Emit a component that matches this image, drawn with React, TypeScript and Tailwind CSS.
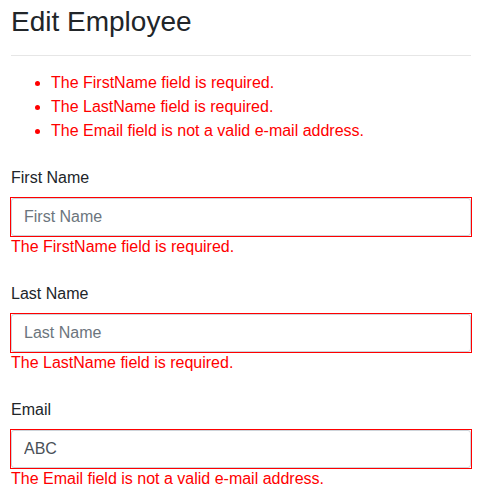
import React from 'react';

type Field = {
  label: string;
  placeholder: string;
  value?: string;
  error: string;
};

const fields: Field[] = [
  { label: 'First Name', placeholder: 'First Name', error: 'The FirstName field is required.' },
  { label: 'Last Name', placeholder: 'Last Name', error: 'The LastName field is required.' },
  { label: 'Email', placeholder: 'Email', value: 'ABC', error: 'The Email field is not a valid e-mail address.' },
];

const summary = [
  'The FirstName field is required.',
  'The LastName field is required.',
  'The Email field is not a valid e-mail address.',
];

function FormField({ field }: { field: Field }) {
  return (
    <div className="mb-[25px]">
      <label className="block leading-6 mb-2">{field.label}</label>
      {/* square red outline around the rounded input */}
      <div className="-mx-px -my-px border border-[#ff0000]">
        <input
          className="block w-full h-[38px] px-3 border border-[#ced4da] rounded-[3px] bg-white text-[16px] text-[#495057] placeholder:text-[#6c757d] outline-none"
          placeholder={field.placeholder}
          defaultValue={field.value}
        />
      </div>
      <div className="leading-[21px] text-[#ff0000]">{field.error}</div>
    </div>
  );
}

export default function App() {
  return (
    <div className="min-h-screen bg-white px-[11px] pt-[5px] font-['Liberation_Sans',Arial,sans-serif] text-[16px] leading-6 text-[#212529]">
      <h3 className="text-[28px] leading-[1.2] mb-4">Edit Employee</h3>
      <hr className="border-[#e6e6e6]" />
      <ul className="list-disc pl-10 mt-[15px] mb-[23px] text-[#ff0000]">
        {summary.map((s) => (
          <li key={s}>{s}</li>
        ))}
      </ul>
      {fields.map((f) => (
        <FormField key={f.label} field={f} />
      ))}
    </div>
  );
}
